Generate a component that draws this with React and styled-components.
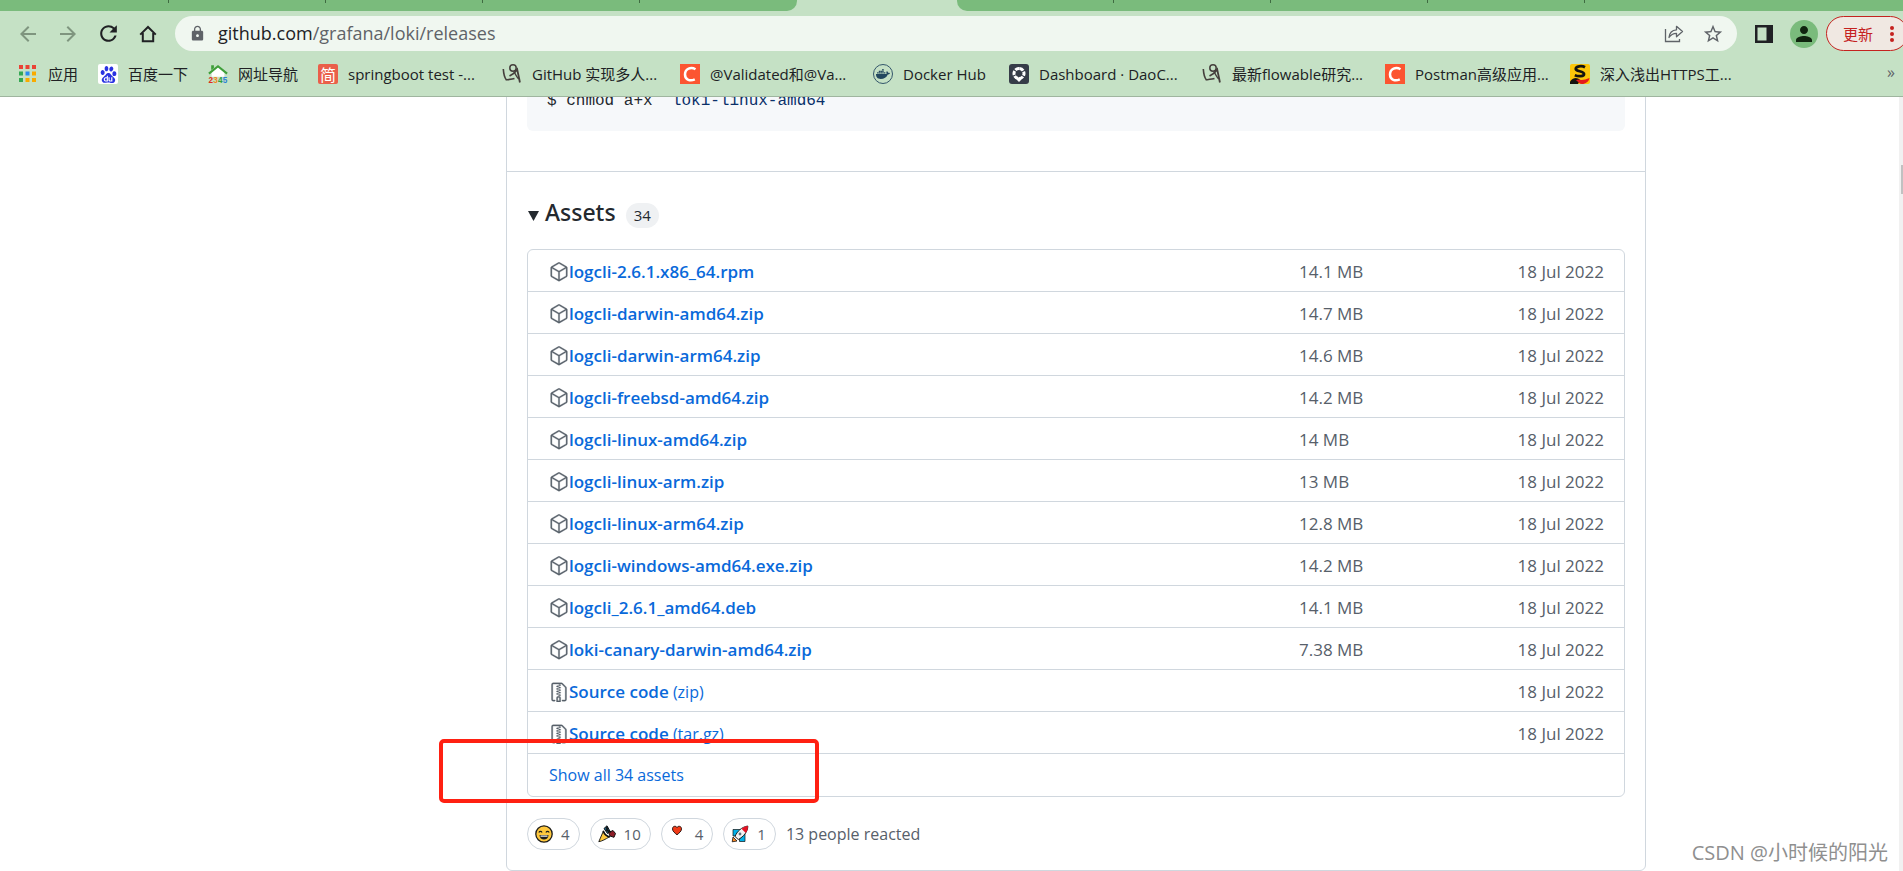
import React from 'react'
import styled, { createGlobalStyle } from 'styled-components'
import { GoPackage, GoFileZip } from 'react-icons/go'
import { MdArrowBack, MdArrowForward, MdRefresh, MdLock, MdStarBorder, MdPerson } from 'react-icons/md'
import { FaDocker } from 'react-icons/fa'
import { SiBaidu } from 'react-icons/si'

const GlobalStyle = createGlobalStyle`
*{
  box-sizing: border-box;
}
body{
  margin: 0;
  background: #fff;
  color: #24292f;
  font-family: "Open Sans", "Noto Sans CJK SC", sans-serif;
  overflow: hidden;
}
a{
  text-decoration: none;
  color: inherit;
}
button{
  font-family: inherit;
  background: none;
  border: 0;
  padding: 0;
}
svg{
  display: block;
  flex-shrink: 0;
}
`

const Window = styled.div`
position: relative;
display: flex;
flex-direction: column;
height: 100vh;
overflow: hidden;
`

/* ---------- browser chrome ---------- */

const Header = styled.header`
flex-shrink: 0;
background: #c5e1c5;
border-bottom: 1px solid #9fb59f;
overflow: hidden;
`

const TabStrip = styled.div`
display: grid;
grid-template-columns: 797px 1fr;
column-gap: 160px;
height: 11px;
`

const TabGroup = styled.div`
display: flex;
justify-content: ${props => props.$before ? 'flex-end' : 'flex-start'};
background: #7abb7c;
border-radius: ${props => props.$before ? '0 0 10px 0' : '0 0 0 10px'};
`

const Tab = styled.div`
display: flex;
justify-content: flex-end;
flex: 0 0 157px;

&::after{
  content: "";
  width: 1px;
  height: 3px;
  background: ${props => props.$last ? 'transparent' : '#3f6b41'};
}
`

const Toolbar = styled.div`
display: flex;
align-items: center;
padding: 5px 0 1px 13px;
`

const NavButtons = styled.nav`
display: flex;
gap: 10px;
margin-right: 12px;
`

const NavButton = styled.button`
display: flex;
align-items: center;
justify-content: center;
width: 30px;
height: 30px;
color: ${props => props.disabled ? '#7f957f' : '#202124'};
`

const Omnibox = styled.div`
display: flex;
align-items: center;
flex: 1;
min-width: 0;
height: 35px;
padding: 0 13px 0 14px;
border-radius: 18px;
background: #f0f7f0;
color: #5f6368;
`

const Address = styled.div`
flex: 1;
margin-left: 12px;
padding-bottom: 2px;
font-size: 18px;
line-height: 24px;

b{
  font-weight: 400;
  color: #202124;
}
`

const OmniButton = styled.button`
display: flex;
margin-left: 18px;
color: #5f6368;
`

const Avatar = styled.button`
display: flex;
align-items: center;
justify-content: center;
width: 28px;
height: 28px;
margin: 0 8px 0 17px;
border-radius: 50%;
background: #7abb7c;
color: #10240f;
`

const PanelButton = styled.button`
display: flex;
margin-left: 18px;
`

const UpdateButton = styled.button`
display: flex;
align-items: center;
justify-content: space-between;
width: 82px;
height: 35px;
margin-right: -5px;
padding: 0 13px 0 16px;
border: 1px solid #c5221f;
border-radius: 18px;
background: #f0e8e2;
color: #c5221f;
font-size: 15px;
`

const BookmarkBar = styled.div`
display: flex;
align-items: center;
height: 44px;
padding: 0 8px 0 18px;
font-size: 15px;
line-height: 24px;
color: #202124;
`

const Bookmark = styled.a`
display: flex;
align-items: center;
gap: 10px;
flex: 0 0 ${props => props.$width}px;
white-space: nowrap;
`

const More = styled.button`
margin-left: auto;
color: #5f6368;
font-size: 16px;
line-height: 20px;
padding-bottom: 4px;
`

/* ---------- page ---------- */

const Page = styled.main`
position: relative;
display: grid;
grid-template-columns: 2fr minmax(0, 1140px) 1fr 4px;
flex: 1;
min-height: 0;
overflow: hidden;
`

const ScrollTrack = styled.div`
grid-column: 4;
padding: 68px 0 0 2px;
background: #f1f1f1;
`

const ScrollThumb = styled.div`
height: 29px;
background: #c1c1c1;
`

// the release is scrolled down to its last code line
const ReleaseCard = styled.section`
grid-column: 2;
align-self: start;
margin-top: -51px;
border: 1px solid #d0d7de;
border-radius: 6px;
`

const ReleaseBody = styled.div`
padding: 20px 20px 40px;
`

const CodeBlock = styled.pre`
margin: 0;
padding: 22px 20px 18px;
border-radius: 6px;
background: #f6f8fa;
font-family: "Liberation Mono", monospace;
font-size: 16px;
line-height: 24px;

span{
  color: #0a3069;
}
`

const ReleaseFooter = styled.div`
padding: 20px;
border-top: 1px solid #d0d7de;
`

const Summary = styled.summary`
display: flex;
align-items: baseline;
height: 36px;
padding-top: 2px;
list-style: none;
`

const Caret = styled.svg`
margin: 0 6px 0 1px;
`

const Heading = styled.h3`
margin: 0;
font-family: "Noto Sans", "Open Sans", sans-serif;
font-size: 23px;
font-weight: 500;
line-height: 36px;
`

const Counter = styled.span`
margin-left: 10px;
padding: 0 8px;
border-radius: 13px;
background: #eff1f3;
font-size: 15px;
line-height: 25px;
`

const AssetsBox = styled.div`
position: relative;
margin: 21px 0;
border: 1px solid #d0d7de;
border-radius: 6px;
`

const AssetsTable = styled.table`
width: 100%;
table-layout: fixed;
border-spacing: 0;
font-size: 17px;
line-height: 24px;
`

const AssetRow = styled.tr`
td{
  padding: 10px 0 7px;
  color: #57606a;
}
& + & td{
  border-top: 1px solid #d0d7de;
}
td:first-child{
  padding-left: 21px;
}
td:last-child{
  padding-right: 20px;
  text-align: right;
}
`

const SizeCol = styled.col`
width: 171px;
`

const DateCol = styled.col`
width: 154px;
`

const AssetName = styled.div`
display: flex;
align-items: center;

svg{
  stroke: currentColor;
  stroke-width: 0.4;
}
a{
  color: #0969da;
  font-weight: 600;
}
small{
  font-size: 16px;
  font-weight: 400;
}
`

const ShowAll = styled.button`
display: block;
width: 100%;
padding: 9px 21px;
border-top: 1px solid #d0d7de;
color: #0969da;
font-size: 16px;
line-height: 24px;
text-align: left;
`

const Highlight = styled.div`
position: absolute;
left: -89px;
bottom: -7px;
width: 380px;
height: 64px;
border: 4px solid #ff2012;
border-radius: 5px;
pointer-events: none;
`

const Reactions = styled.div`
display: flex;
align-items: center;
gap: 10px;
color: #57606a;
font-size: 16px;
`

const Reaction = styled.button`
display: flex;
align-items: center;
gap: 8px;
height: 32px;
padding: 0 9px 0 7px;
border: 1px solid #d0d7de;
border-radius: 16px;
color: #57606a;
font-size: 15px;
`

const Watermark = styled.div`
position: absolute;
right: 15px;
bottom: 4px;
color: #8f8f8f;
font-size: 20px;
line-height: 28px;
`

/* ---------- drawings ---------- */

const HomeIcon = () => (
  <svg width="18" height="18" viewBox="0 0 18 18" fill="none" stroke="currentColor" strokeWidth="2">
    <path d="M1.2 9.600 9 2l7.800 7.600M3.800 8v8.200h10.400V8" />
  </svg>
)

const ShareIcon = () => (
  <svg width="20" height="20" viewBox="0 0 20 20" fill="none" stroke="currentColor" strokeWidth="1.300">
    <path d="M1.500 5v12.500h14V15" />
    <path d="M5 13.500C5.500 8.500 8 6 12.500 5.800V2.300L18.500 7.500l-6 5.200V9.300C9 9.300 6.800 10.500 5 13.500Z" strokeLinejoin="round" />
  </svg>
)

const SidePanelIcon = () => (
  <svg width="18" height="18" viewBox="0 0 18 18">
    <path fill="#202124" fillRule="evenodd" d="M0 0h18v18H0ZM2.500 2.500v13h9v-13Z" />
  </svg>
)

const DotsIcon = () => (
  <svg width="4" height="18" viewBox="0 0 4 18" fill="currentColor">
    <circle cx="2" cy="3" r="2" />
    <circle cx="2" cy="9" r="2" />
    <circle cx="2" cy="15" r="2" />
  </svg>
)

const appColors = ['#ea4335', '#ea4335', '#ea4335', '#34a853', '#2a8cf0', '#f9ab00', '#34a853', '#f9ab00', '#f9ab00']

const AppsIcon = () => (
  <svg width="20" height="20" viewBox="0 0 20 20">
    {appColors.map((color, i) => (
      <rect key={i} x={1 + (i % 3) * 6.500} y={1 + Math.floor(i / 3) * 6.500} width="4" height="4" fill={color} />
    ))}
  </svg>
)

const Tile = styled.span`
display: flex;
align-items: center;
justify-content: center;
flex: 0 0 20px;
height: 20px;
border-radius: 2px;
background: ${props => props.$bg};
color: ${props => props.$fg};
font-family: "Noto Sans CJK SC", sans-serif;
font-size: 16px;
line-height: 20px;
`

const HouseIcon = () => (
  <svg width="20" height="20" viewBox="0 0 22 20">
    <path d="M4 8v5h14V8l-7-6Z" fill="#fff" />
    <path d="M1 9.500 11 1.500l10 8" fill="none" stroke="#3f9f3a" strokeWidth="2.400" />
    <path d="M3.500 0.500h3v3l-3 2Z" fill="#3f9f3a" />
    <g fontFamily="Liberation Sans, sans-serif" fontSize="9" fontWeight="700">
      <text x="0.500" y="19.500" fill="#e02a20">2</text>
      <text x="5.800" y="19.500" fill="#f08a1c">3</text>
      <text x="11" y="19.500" fill="#2f9e3c">4</text>
      <text x="16.200" y="19.500" fill="#2b7fd6">5</text>
    </g>
  </svg>
)

const FigureIcon = () => (
  <svg width="20" height="20" viewBox="0 0 20 20" fill="none" stroke="#453f3c">
    <circle cx="11" cy="4" r="3.200" strokeWidth="1.500" />
    <path d="M1.300 5c.3 4.500 1.200 8.500 3 10.800 3-.3 6.500-.6 8.200-1.200" strokeWidth="1.600" />
    <path d="M7.500 12c2.500-1.200 5.300-3 7.700-6.500.9 4.500 2 8.500 2.700 13" strokeWidth="1.800" />
    <path d="M12.500 8.500c1 2 2.500 5 4.300 6.500" strokeWidth="1.400" />
  </svg>
)

const CsdnIcon = () => (
  <svg width="20" height="20" viewBox="0 0 20 20">
    <path d="M0 0h20v20H0Z" fill="#fc5531" />
    <path d="M15.500 5.200C11 2.500 5 4.500 5 10.500c0 5.800 5.500 6.800 9.800 4.800" fill="none" stroke="#fff" strokeWidth="2.500" />
  </svg>
)

const DockerRing = styled.span`
display: flex;
align-items: center;
justify-content: center;
flex: 0 0 20px;
height: 20px;
border: 1px solid #33566b;
border-radius: 50%;
color: #23485f;
`

const DaoIcon = () => (
  <svg width="20" height="20" viewBox="0 0 20 20">
    <rect width="20" height="20" rx="3" fill="#363c48" />
    <circle cx="10" cy="9.500" r="5" fill="none" stroke="#fff" strokeWidth="3" strokeDasharray="4.200 1.036" transform="rotate(-84 10 9.500)" />
    <path d="m10 13 2.500 2.500L10 18l-2.500-2.500Z" fill="#fff" />
  </svg>
)

const SIcon = () => (
  <svg width="20" height="20" viewBox="0 0 20 20">
    <rect width="20" height="20" rx="2" fill="#fcc60a" />
    <path d="M0 20v-2.500c4-4.500 7-4 10-1.500l-2 4Z" fill="#15130f" />
    <path d="M8 15.500c3.500.8 7 .5 11.500-1.500-.5 3.500-4 6-7.500 6-2.500 0-3.500-2.500-6-3.800Z" fill="#e5191c" />
    <path d="M15 3.200C12 1.500 5.500 2 5.800 5c.3 2.700 8.200 1.800 8.200 5 0 2.600-5.500 2.700-9.200 1.200" fill="none" stroke="#15130f" strokeWidth="2.800" />
  </svg>
)

const SmileIcon = () => (
  <svg width="18" height="18" viewBox="0 0 18 18">
    <circle cx="9" cy="9" r="8.200" fill="#ffc83d" stroke="#1d1d1b" strokeWidth="1.300" />
    <path d="M3.800 7.500c.8-1.500 2.500-1.500 3.300 0M10.900 7.500c.8-1.500 2.500-1.500 3.300 0" fill="none" stroke="#1d1d1b" strokeWidth="1.100" />
    <path d="M4.500 10h9c0 6-9 6-9 0Z" fill="#1d1d1b" />
    <path d="M5.500 10.500h7v1.200h-7Z" fill="#fff" />
  </svg>
)

const PartyIcon = () => (
  <svg width="18" height="18" viewBox="0 0 18 18">
    <path d="M6 3.500 9 .8l3 5.500-2.500 2.200Z" fill="#1b5a7a" stroke="#111" />
    <path d="m10.500 7.500 4.500-2 2.500 3-1.500 3.800-4-1.300Z" fill="#8d1c26" stroke="#111" />
    <path d="M9 2v3.500l4 1.500" fill="none" stroke="#111" strokeWidth="1.600" />
    <path d="M5.200 6.500.8 16.700c3-.5 7-2.500 10.200-4.700C8.500 11 6.500 9 5.200 6.500Z" fill="#ffc83d" stroke="#111" strokeWidth=".9" />
    <path d="M5.200 5.800c1 3.200 3.300 5.500 6.800 6.200" fill="none" stroke="#111" strokeWidth="1.600" />
  </svg>
)

const HeartIcon = () => (
  <svg width="18" height="18" viewBox="0 0 18 18">
    <path d="M8 9.800C5.500 7.800 3.500 6.200 3.500 3.800 3.500 1 6.800.5 8 2.500 9.200.5 12.500 1 12.500 3.800c0 2.400-2 4-4.500 6Z" fill="#f03a17" stroke="#2b1510" />
  </svg>
)

const RocketIcon = () => (
  <svg width="18" height="18" viewBox="0 0 18 18">
    <path d="M2 4.500h8L6 11H2ZM8.500 14 14 8v8.500H8.500Z" fill="#00b0e8" stroke="#111" strokeWidth=".7" />
    <path d="M1.200 16.800 2 12l4 4Z" fill="#ff8a24" stroke="#111" strokeWidth=".8" />
    <path d="M4 11.500C6 6.500 10.500 2 16.800 1c.3 5.500-4.500 10.800-9.500 13.500Z" fill="#f3f3f3" stroke="#111" strokeWidth=".9" />
    <path d="M10.500 3.700C12.500 2.200 15 1.200 16.800 1c.2 2.500-.6 5-2 7Z" fill="#e81224" />
    <circle cx="9" cy="9" r="1.400" fill="#5c7380" />
  </svg>
)

/* ---------- data ---------- */

const bookmarks = [
  { label: '应用', width: 80, icon: <AppsIcon /> },
  { label: '百度一下', width: 110, icon: <Tile $bg="#fff" $fg="#2932e1"><SiBaidu size={17} /></Tile> },
  { label: '网址导航', width: 110, icon: <HouseIcon /> },
  { label: 'springboot test -...', width: 184, icon: <Tile $bg="#ea5f4a" $fg="#fff">简</Tile> },
  { label: 'GitHub 实现多人...', width: 178, icon: <FigureIcon /> },
  { label: '@Validated和@Va...', width: 193, icon: <CsdnIcon /> },
  { label: 'Docker Hub', width: 136, icon: <DockerRing><FaDocker size={14} /></DockerRing> },
  { label: 'Dashboard · DaoC...', width: 193, icon: <DaoIcon /> },
  { label: '最新flowable研究...', width: 183, icon: <FigureIcon /> },
  { label: 'Postman高级应用...', width: 185, icon: <CsdnIcon /> },
  { label: '深入浅出HTTPS工...', width: 170, icon: <SIcon /> },
]

const assets = [
  { name: 'logcli-2.6.1.x86_64.rpm', size: '14.1 MB' },
  { name: 'logcli-darwin-amd64.zip', size: '14.7 MB' },
  { name: 'logcli-darwin-arm64.zip', size: '14.6 MB' },
  { name: 'logcli-freebsd-amd64.zip', size: '14.2 MB' },
  { name: 'logcli-linux-amd64.zip', size: '14 MB' },
  { name: 'logcli-linux-arm.zip', size: '13 MB' },
  { name: 'logcli-linux-arm64.zip', size: '12.8 MB' },
  { name: 'logcli-windows-amd64.exe.zip', size: '14.2 MB' },
  { name: 'logcli_2.6.1_amd64.deb', size: '14.1 MB' },
  { name: 'loki-canary-darwin-amd64.zip', size: '7.38 MB' },
  { name: 'Source code', format: '(zip)' },
  { name: 'Source code', format: '(tar.gz)' },
]

const reactions = [
  { name: 'laugh', count: 4, icon: <SmileIcon /> },
  { name: 'hooray', count: 10, icon: <PartyIcon /> },
  { name: 'heart', count: 4, icon: <HeartIcon /> },
  { name: 'rocket', count: 1, icon: <RocketIcon /> },
]

const BrowserHeader = () => (
  <Header>
    <TabStrip>
      <TabGroup $before>
        {[1, 2, 3, 4, 5].map(n => <Tab key={n} $last={n === 5} />)}
      </TabGroup>
      <TabGroup>
        {[1, 2, 3, 4].map(n => <Tab key={n} />)}
      </TabGroup>
    </TabStrip>
    <Toolbar>
      <NavButtons>
        <NavButton disabled aria-label="Back"><MdArrowBack size={24} /></NavButton>
        <NavButton disabled aria-label="Forward"><MdArrowForward size={24} /></NavButton>
        <NavButton aria-label="Reload"><MdRefresh size={25} /></NavButton>
        <NavButton aria-label="Home"><HomeIcon /></NavButton>
      </NavButtons>
      <Omnibox>
        <MdLock size={17} />
        <Address><b>github.com</b>/grafana/loki/releases</Address>
        <OmniButton aria-label="Share"><ShareIcon /></OmniButton>
        <OmniButton aria-label="Bookmark"><MdStarBorder size={22} /></OmniButton>
      </Omnibox>
      <PanelButton aria-label="Side panel"><SidePanelIcon /></PanelButton>
      <Avatar aria-label="Profile"><MdPerson size={24} /></Avatar>
      <UpdateButton>更新<DotsIcon /></UpdateButton>
    </Toolbar>
    <BookmarkBar>
      {bookmarks.map(item => (
        <Bookmark key={item.label} href="#" $width={item.width}>{item.icon}{item.label}</Bookmark>
      ))}
      <More>»</More>
    </BookmarkBar>
  </Header>
)

const Asset = ({ name, format, size }) => (
  <AssetRow>
    <td>
      <AssetName>
        {format ? <GoFileZip size={20} /> : <GoPackage size={20} />}
        <a href="#">{name}{format && <small> {format}</small>}</a>
      </AssetName>
    </td>
    <td>{size}</td>
    <td>18 Jul 2022</td>
  </AssetRow>
)

const App = () => {
  return (
    <Window>
      <GlobalStyle />
      <BrowserHeader />
      <Page>
        <ReleaseCard>
          <ReleaseBody>
            <CodeBlock>$ chmod a+x  <span>loki-linux-amd64</span></CodeBlock>
          </ReleaseBody>
          <ReleaseFooter>
            <details open>
              <Summary>
                <Caret width="11" height="10" viewBox="0 0 11 10">
                  <path d="M0 0h11L5.500 10Z" fill="#24292f" />
                </Caret>
                <Heading>Assets</Heading>
                <Counter>34</Counter>
              </Summary>
              <AssetsBox>
                <AssetsTable>
                  <colgroup>
                    <col />
                    <SizeCol />
                    <DateCol />
                  </colgroup>
                  <tbody>
                    {assets.map((asset, i) => <Asset key={i} {...asset} />)}
                  </tbody>
                </AssetsTable>
                <ShowAll>Show all 34 assets</ShowAll>
                <Highlight />
              </AssetsBox>
            </details>
            <Reactions>
              {reactions.map(item => (
                <Reaction key={item.name} aria-label={item.name}>{item.icon}{item.count}</Reaction>
              ))}
              <span>13 people reacted</span>
            </Reactions>
          </ReleaseFooter>
        </ReleaseCard>
        <ScrollTrack>
          <ScrollThumb />
        </ScrollTrack>
      </Page>
      <Watermark>CSDN @小时候的阳光</Watermark>
    </Window>
  )
}

export default App
